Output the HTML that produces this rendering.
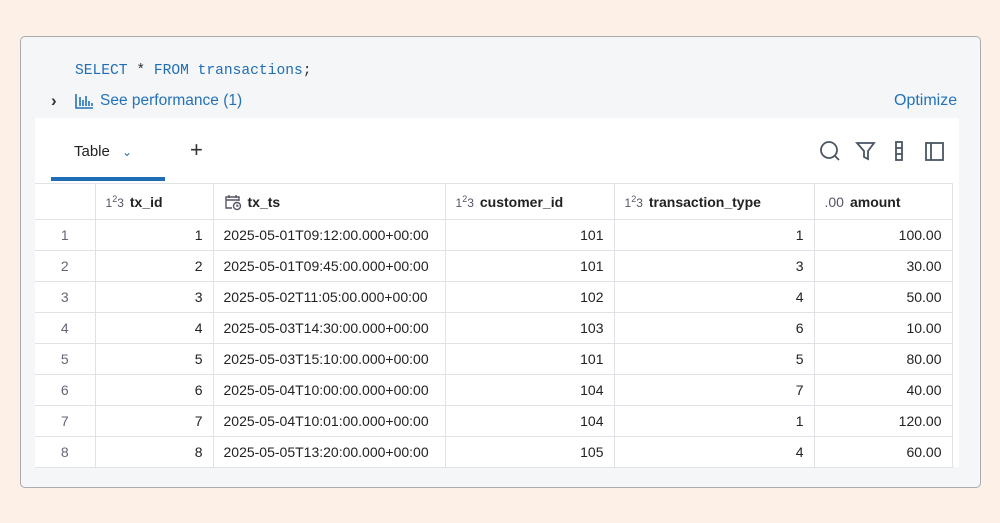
<!DOCTYPE html>
<html><head><meta charset="utf-8"><style>
*{box-sizing:border-box;margin:0;padding:0}
body{width:1000px;height:523px;background:#fdf0e6;font-family:"Liberation Sans",sans-serif;position:relative;overflow:hidden}
.card{position:absolute;left:20px;top:36px;width:961px;height:452px;background:#f5f6f8;border:1px solid #a9abae;border-radius:5px}
.sql{position:absolute;left:75px;top:63px;font-family:"Liberation Mono",monospace;font-size:14.6px;color:#1f6db5}
.sql b{font-weight:normal;color:#333}
.perf{position:absolute;left:75px;top:92px;font-size:15.5px;color:#2372b8;display:flex;align-items:center;gap:6px}
.chev{position:absolute;left:51px;top:91px;font-size:17px;color:#333;font-weight:bold}
.opt{position:absolute;left:894px;top:92px;font-size:16px;color:#2372b8}
.panel{position:absolute;left:35px;top:118px;width:924px;height:349px;background:#fff}
.tab{position:absolute;left:74px;top:143px;font-size:15px;color:#222}
.tabline{position:absolute;left:51px;top:177px;width:114px;height:4px;background:#1f6db5}
.plus{position:absolute;left:190px;top:137px;font-size:22px;color:#333}
.t{position:absolute;left:35px;top:183px;border-collapse:collapse;font-size:14px;color:#222}
.t td{border:1px solid #dfe3e8;height:31px;padding:0 10px;white-space:nowrap}
.t tr:first-child td{height:36px;font-weight:600;color:#222;text-align:left}
.t td.n{text-align:right}
.t td.i{text-align:center;color:#667;border-left:none}
.t tr td:last-child{border-right:1px solid #dfe3e8}
.ic{color:#556;font-weight:normal;font-size:12px;margin-right:6px}
sup{font-size:9px}
</style></head><body>
<div class="card"></div>
<div class="sql">SELECT <b>*</b> FROM transactions<b>;</b></div>
<div class="chev">›</div>
<div class="perf"><svg width="19" height="16" viewBox="0 0 19 16" fill="none" stroke="#2372b8" stroke-width="1.6"><path d="M1 1V15H18M5 4V13M8 7V13M11 3V13M14 8V13M17 10V13"/></svg>See performance (1)</div>
<div class="opt">Optimize</div>
<div class="panel"></div>
<div class="tab">Table <span style="color:#1f6db5;font-size:12px;margin-left:8px">&#8964;</span></div>
<div class="tabline"></div>
<div class="plus">+</div>
<svg style="position:absolute;left:818px;top:139px" width="130" height="24" fill="none" stroke="#4a5563" stroke-width="1.8">
<circle cx="11" cy="11" r="8"/><path d="M17 17L21 21"/>
<path d="M39 4H56L50 12V20L46 18V12Z"/>
<rect x="78" y="3" width="6" height="18"/><path d="M78 9H84M78 15H84"/>
<rect x="108" y="4" width="17" height="17"/><path d="M113 4V21"/>
</svg>
<table class="t">
<tr><td style="width:60px;border-left:none"></td><td style="width:118px"><span class="ic">1<sup>2</sup>3</span>tx_id</td><td style="width:232px"><svg width="18" height="18" viewBox="0 0 18 18" fill="none" stroke="#556" stroke-width="1.4" style="vertical-align:-4px;margin-right:6px"><path d="M8 15H2V4H15V8M2 7H15M5 2V5M12 2V5"/><circle cx="13" cy="13" r="3.5"/><path d="M13 11.5V13H14.5"/></svg>tx_ts</td><td style="width:169px"><span class="ic">1<sup>2</sup>3</span>customer_id</td><td style="width:200px"><span class="ic">1<sup>2</sup>3</span>transaction_type</td><td style="width:138px"><span class="ic" style="font-size:14px">.00</span>amount</td></tr>
<tr><td class="i">1</td><td class="n">1</td><td>2025-05-01T09:12:00.000+00:00</td><td class="n">101</td><td class="n">1</td><td class="n">100.00</td></tr>
<tr><td class="i">2</td><td class="n">2</td><td>2025-05-01T09:45:00.000+00:00</td><td class="n">101</td><td class="n">3</td><td class="n">30.00</td></tr>
<tr><td class="i">3</td><td class="n">3</td><td>2025-05-02T11:05:00.000+00:00</td><td class="n">102</td><td class="n">4</td><td class="n">50.00</td></tr>
<tr><td class="i">4</td><td class="n">4</td><td>2025-05-03T14:30:00.000+00:00</td><td class="n">103</td><td class="n">6</td><td class="n">10.00</td></tr>
<tr><td class="i">5</td><td class="n">5</td><td>2025-05-03T15:10:00.000+00:00</td><td class="n">101</td><td class="n">5</td><td class="n">80.00</td></tr>
<tr><td class="i">6</td><td class="n">6</td><td>2025-05-04T10:00:00.000+00:00</td><td class="n">104</td><td class="n">7</td><td class="n">40.00</td></tr>
<tr><td class="i">7</td><td class="n">7</td><td>2025-05-04T10:01:00.000+00:00</td><td class="n">104</td><td class="n">1</td><td class="n">120.00</td></tr>
<tr><td class="i">8</td><td class="n">8</td><td>2025-05-05T13:20:00.000+00:00</td><td class="n">105</td><td class="n">4</td><td class="n">60.00</td></tr>
</table>
</body></html>
